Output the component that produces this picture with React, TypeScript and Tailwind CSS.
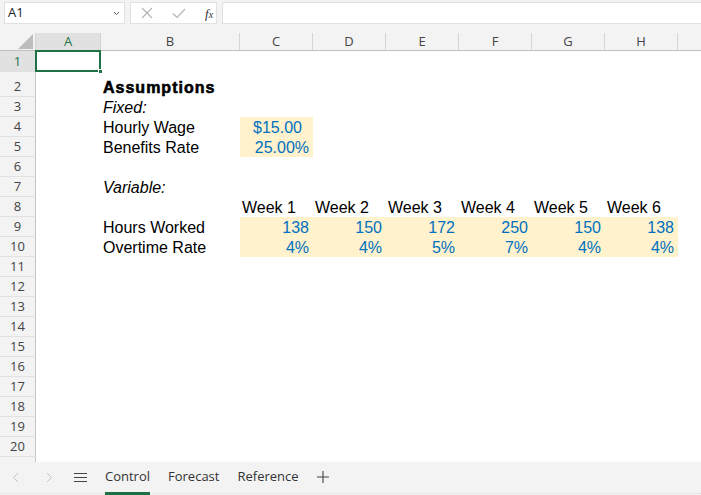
import React from "react";

type Cell = { t: string; kind?: "bold" | "italic" | "num" | "week"; y?: boolean; pr?: number };

const COLW = [65, 139, 73, 73, 73, 73, 73, 73];
const LETTERS = ["A", "B", "C", "D", "E", "F", "G", "H"];

const rows: { h: number; cells: Record<number, Cell> }[] = [];
for (let i = 1; i <= 20; i++) rows.push({ h: i === 1 ? 21 : i === 2 ? 25 : 20, cells: {} });

rows[1].cells[1] = { t: "Assumptions", kind: "bold" };
rows[2].cells[1] = { t: "Fixed:", kind: "italic" };
rows[3].cells[1] = { t: "Hourly Wage" };
rows[3].cells[2] = { t: "$15.00", kind: "num", y: true, pr: 11 };
rows[4].cells[1] = { t: "Benefits Rate" };
rows[4].cells[2] = { t: "25.00%", kind: "num", y: true };
rows[6].cells[1] = { t: "Variable:", kind: "italic" };
["Week 1", "Week 2", "Week 3", "Week 4", "Week 5", "Week 6"].forEach((w, i) => {
  rows[7].cells[i + 2] = { t: w, kind: "week" };
});
rows[8].cells[1] = { t: "Hours Worked" };
["138", "150", "172", "250", "150", "138"].forEach((v, i) => {
  rows[8].cells[i + 2] = { t: v, kind: "num", y: true };
});
rows[9].cells[1] = { t: "Overtime Rate" };
["4%", "4%", "5%", "7%", "4%", "4%"].forEach((v, i) => {
  rows[9].cells[i + 2] = { t: v, kind: "num", y: true };
});

const ui = { fontFamily: '"Open Sans", "Noto Sans", sans-serif' };
const cellFont = { fontFamily: '"Liberation Sans", Arial, sans-serif' };

function CellView({ c, w, first }: { c?: Cell; w: number; first?: boolean }) {
  const base = "relative flex items-end shrink-0 h-full text-[16px] leading-[18px] whitespace-nowrap";
  if (!c) {
    return (
      <div className={base} style={{ width: w }}>
        {first && (
          <>
            <div className="absolute left-[-1px] top-[-1px] right-0 bottom-0 border-2 border-[#1e7145]" />
            <div className="absolute right-[-2px] bottom-[-2px] w-[5px] h-[5px] bg-[#1e7145] border border-white" />
          </>
        )}
      </div>
    );
  }
  let cls = "";
  if (c.kind === "bold") cls = "font-bold tracking-[1px] text-black [-webkit-text-stroke:0.6px_black] pl-[2px]";
  else if (c.kind === "italic") cls = "italic text-black pl-[2px]";
  else if (c.kind === "num") cls = "justify-end text-[#0070c0] pr-[4px]";
  else cls = "text-black pl-[2px]";
  return (
    <div
      className={`${base} ${cls} ${c.y ? "bg-[#fff2cc]" : ""}`}
      style={{ width: w, ...(c.pr ? { paddingRight: c.pr } : {}) }}
    >
      {c.t}
    </div>
  );
}

export default function App() {
  return (
    <div className="w-[701px] h-[495px] overflow-hidden bg-white flex flex-col" style={ui}>
      {/* formula bar */}
      <div className="h-[33px] shrink-0 bg-[#f3f3f3] flex items-start pt-[2px] pl-[4px] gap-[5px]">
        <div className="w-[121px] h-[22px] bg-white border border-[#e1e1e1] flex items-center justify-between pl-[3px] pr-[4px] text-[13px] text-[#222]">
          <span>A1</span>
          <svg width="7" height="5" viewBox="0 0 7 5">
            <path d="M1 1 L3.5 3.5 L6 1" fill="none" stroke="#555" strokeWidth="1" />
          </svg>
        </div>
        <div className="w-[87px] h-[22px] bg-white border border-[#e1e1e1] flex items-center pl-[10px]">
          <svg width="12" height="12" viewBox="0 0 12 12">
            <path d="M1 1 L11 11 M11 1 L1 11" stroke="#b3b3b3" strokeWidth="1.1" fill="none" />
          </svg>
          <svg className="ml-[19px]" width="14" height="11" viewBox="0 0 14 11">
            <path d="M1 5.5 L5 9.5 L13 1" stroke="#b3b3b3" strokeWidth="1.1" fill="none" />
          </svg>
          <span
            className="ml-[19px] italic text-[13px] text-[#333] leading-none"
            style={{ fontFamily: '"Liberation Serif", "Times New Roman", serif' }}
          >
            <i>f</i>
            <span className="text-[10px]">x</span>
          </span>
        </div>
        <div className="flex-1 h-[22px] bg-white border border-[#e1e1e1] border-r-0" />
      </div>

      {/* column header */}
      <div className="h-[18px] shrink-0 flex bg-[#f3f3f3] border-b border-[#bfbfbf] text-[13px] text-[#444]">
        <div className="relative w-[36px] shrink-0 h-full border-r border-[#d4d4d4]">
          <svg className="absolute right-[2px] bottom-[1px]" width="15" height="15" viewBox="0 0 15 15">
            <path d="M15 0 L15 15 L0 15 Z" fill="#bdbdbd" />
          </svg>
        </div>
        {LETTERS.map((l, i) => (
          <div
            key={l}
            className={`shrink-0 h-full flex items-center justify-center border-r border-[#d4d4d4] ${
              i === 0 ? "bg-[#e1e1e1] text-[#1e7145]" : ""
            }`}
            style={{ width: COLW[i] }}
          >
            {l}
          </div>
        ))}
        <div className="flex-1" />
      </div>

      {/* grid */}
      <div className="flex-1 flex flex-col min-h-0" style={cellFont}>
        {rows.map((r, ri) => (
          <div key={ri} className="flex shrink-0" style={{ height: r.h }}>
            <div
              className={`w-[36px] shrink-0 h-full flex items-end justify-center border-r border-[#c6c6c6] border-b border-b-[#e1e1e1] text-[13px] leading-[20px] ${
                ri === 0 ? "bg-[#e1e1e1] text-[#1e7145]" : "bg-[#f3f3f3] text-[#444]"
              }`}
              style={ui}
            >
              {ri + 1}
            </div>
            {COLW.map((w, ci) => (
              <CellView key={ci} c={r.cells[ci]} w={w} first={ri === 0 && ci === 0} />
            ))}
            <div className="flex-1" />
          </div>
        ))}
        <div className="flex-1 flex">
          <div className="w-[36px] shrink-0 h-full bg-[#f3f3f3] border-r border-[#c6c6c6]" />
        </div>
      </div>

      {/* sheet tabs */}
      <div className="h-[33px] shrink-0 bg-[#f3f3f3] flex items-center pb-[3px] text-[13px] text-[#333] relative">
        <div className="absolute left-0 right-0 bottom-[1px] border-b border-dotted border-[#dcdcdc]" />
        <svg className="ml-[12px]" width="7" height="11" viewBox="0 0 7 11">
          <path d="M6 1 L1.5 5.5 L6 10" fill="none" stroke="#c4c4c4" strokeWidth="1" />
        </svg>
        <svg className="ml-[27px]" width="7" height="11" viewBox="0 0 7 11">
          <path d="M1 1 L5.5 5.5 L1 10" fill="none" stroke="#c4c4c4" strokeWidth="1" />
        </svg>
        <svg className="ml-[21px]" width="13" height="11" viewBox="0 0 13 11">
          <path d="M0 1.5 H13 M0 5.5 H13 M0 9.5 H13" stroke="#444" strokeWidth="1.1" />
        </svg>
        <div className="relative ml-[18px] self-stretch flex items-center">
          <span>Control</span>
          <div className="absolute left-0 right-0 bottom-[-3px] h-[3px] bg-[#1e7145]" />
        </div>
        <span className="ml-[18px]">Forecast</span>
        <span className="ml-[18px]">Reference</span>
        <svg className="ml-[18px]" width="12" height="12" viewBox="0 0 12 12">
          <path d="M6 0 V12 M0 6 H12" stroke="#444" strokeWidth="1.1" />
        </svg>
      </div>
    </div>
  );
}
